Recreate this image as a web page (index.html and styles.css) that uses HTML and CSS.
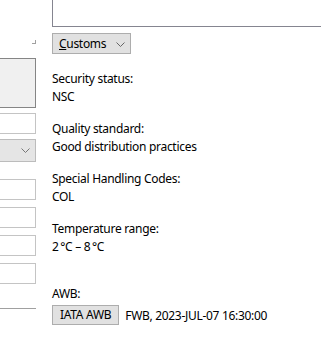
FILE: index.html
```html
<!DOCTYPE html>
<html>
<head>
<meta charset="utf-8">
<link rel="stylesheet" href="styles.css">
</head>
<body>
<div class="page">
  <div class="left">
    <div class="grip"></div>
    <div class="panel"></div>
    <div class="tb tb-first"></div>
    <div class="combo"><svg class="chev" width="9" height="5" viewBox="0 0 9 5"><path d="M0.5 0.5 L4.5 4.5 L8.5 0.5" fill="none" stroke="#777" stroke-width="1"/></svg></div>
    <div class="tb tb-gap"></div>
    <div class="tb"></div>
    <div class="tb"></div>
    <div class="tb"></div>
    <div class="sep"></div>
  </div>
  <div class="right">
    <div class="memo"></div>
    <div class="dd"><span class="dd-text"><u>C</u>ustoms</span><svg class="chev" width="9" height="5" viewBox="0 0 9 5"><path d="M0.5 0.5 L4.5 4.5 L8.5 0.5" fill="none" stroke="#666" stroke-width="1"/></svg></div>
    <div class="fields">
      <div class="field">
        <div class="label">Security status:</div>
        <div class="value">NSC</div>
      </div>
      <div class="field">
        <div class="label">Quality standard:</div>
        <div class="value">Good distribution practices</div>
      </div>
      <div class="field">
        <div class="label">Special Handling Codes:</div>
        <div class="value">COL</div>
      </div>
      <div class="field">
        <div class="label">Temperature range:</div>
        <div class="value">2&#8201;°C – 8&#8201;°C</div>
      </div>
      <div class="field awb">
        <div class="label">AWB:</div>
        <div class="awb-row">
          <div class="btn">IATA AWB</div>
          <span class="awb-text">FWB, 2023-JUL-07 16:30:00</span>
        </div>
      </div>
    </div>
  </div>
</div>
</body>
</html>
```
FILE: styles.css
```css
html, body {
  margin: 0;
  padding: 0;
  background: #ffffff;
  overflow: hidden;
}
body {
  font-family: "Noto Sans", "Open Sans", sans-serif;
  font-size: 12px;
  letter-spacing: -0.3px;
  color: #000;
}
.page {
  display: flex;
  width: 321px;
  height: 343px;
  overflow: hidden;
}
.left {
  flex: none;
  width: 60px;
  margin-left: -24px;
  display: flex;
  flex-direction: column;
  align-items: stretch;
}
.grip {
  align-self: flex-end;
  width: 3px;
  height: 3px;
  margin-top: 40px;
  border-right: 1px solid #a0a0a0;
  border-bottom: 1px solid #a0a0a0;
}
.panel {
  margin-top: 14px;
  height: 48px;
  background: #f0f0f0;
  border: 1px solid #858585;
}
.tb {
  height: 19px;
  border: 1px solid #c4c4c4;
  background: #fff;
  margin-top: 7px;
}
.tb-first { margin-top: 5px; }
.tb-gap { margin-top: 17px; }
.combo {
  margin-top: 5px;
  height: 21px;
  background: #e5e5e5;
  border: 1px solid #bcbcbc;
  display: flex;
  align-items: center;
  justify-content: flex-end;
  padding-right: 5px;
}
.sep {
  margin-top: 24px;
  height: 1px;
  background: #a0a0a0;
}
.right {
  flex: none;
  width: 300px;
  margin-left: 16px;
  display: flex;
  flex-direction: column;
  align-items: flex-start;
}
.memo {
  margin-top: -14px;
  width: 300px;
  height: 39px;
  border: 1px solid #858590;
  box-sizing: content-box;
}
.dd {
  margin-top: 6px;
  height: 19px;
  background: #e1e1e1;
  border: 1px solid #adadad;
  display: flex;
  align-items: center;
  justify-content: space-between;
  padding: 0 5px 0 6px;
  box-sizing: content-box;
  width: 66px;
}
.dd-text { line-height: 19px; }
.dd .chev { margin-top: 1px; }
.fields {
  margin-top: 16px;
  display: flex;
  flex-direction: column;
}
.field {
  margin-bottom: 14px;
}
.label, .value {
  line-height: 18px;
  height: 18px;
  white-space: nowrap;
}
.awb { margin-top: 15px; }
.awb-row {
  margin-top: 2px;
  display: flex;
  align-items: center;
  gap: 6px;
}
.btn {
  height: 18px;
  line-height: 18px;
  padding: 0 7px;
  background: #e1e1e1;
  border: 1px solid #adadad;
}
.awb-text { white-space: nowrap; }
```
